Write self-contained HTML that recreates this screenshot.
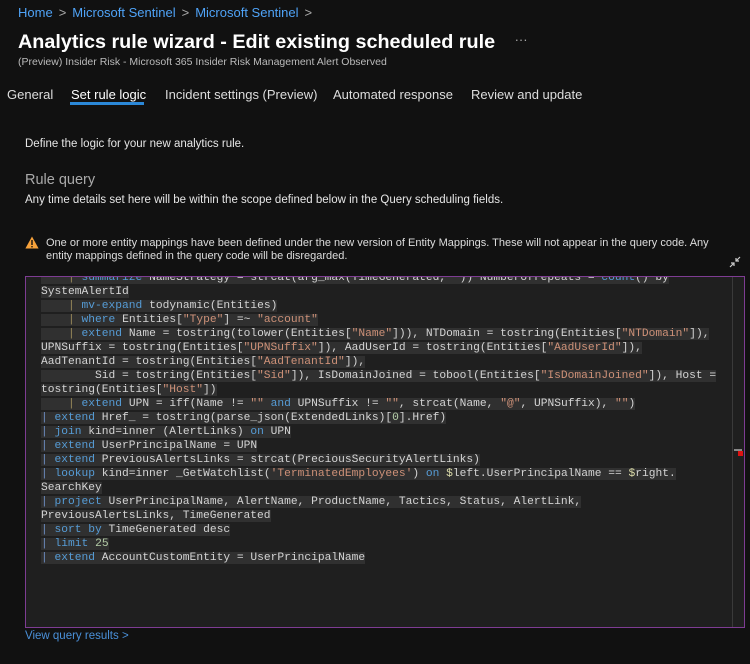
<!DOCTYPE html>
<html><head><meta charset="utf-8"><style>
body{margin:0;width:750px;height:664px;background:#111;color:#fff;font-family:"Liberation Sans",sans-serif;position:relative;overflow:hidden}
.a{position:absolute;white-space:nowrap}
.bc{top:5px;left:18px;font-size:13px;color:#4fa3f7}
.bc i{color:#aaa;font-style:normal;margin:0 6px}
.t{top:31px;left:18px;font-size:19.8px;font-weight:bold;color:#fff}
.st{top:56px;left:18px;font-size:10.5px;color:#bbb}
.tab{top:87px;font-size:13px;color:#ddd}
.ul{top:102px;left:70px;width:74px;height:3px;background:#2b88d8}
.tx{font-size:11.5px;color:#e6e6e6}
.ed{position:absolute;left:25px;top:276px;width:718px;height:350px;background:#1f1f1f;border:1px solid #7e3c93;overflow:hidden}
.code{position:absolute;left:15px;top:-6px;font-family:"Liberation Mono",monospace;font-size:11.25px;line-height:14px;color:#d4d4d4;white-space:pre}
.code span.l{background:#303030;display:inline}
.k{color:#569cd6}.s{color:#ce9178}.n{color:#b5cea8}.y{color:#dcdcaa}.p{color:#9a8a5a}.q{color:#6c8cc0}
</style></head><body>
<div class="a bc">Home<i>&gt;</i>Microsoft Sentinel<i>&gt;</i>Microsoft Sentinel<i>&gt;</i></div>
<div class="a t">Analytics rule wizard - Edit existing scheduled rule <span style="font-weight:normal;font-size:13px;color:#aaa;margin-left:14px;vertical-align:4px">···</span></div>
<div class="a st">(Preview) Insider Risk - Microsoft 365 Insider Risk Management Alert Observed</div>
<div class="a tab" style="left:7px">General</div>
<div class="a tab" style="left:71px;color:#fff">Set rule logic</div>
<div class="a tab" style="left:165px">Incident settings (Preview)</div>
<div class="a tab" style="left:333px">Automated response</div>
<div class="a tab" style="left:471px">Review and update</div>
<div class="a ul"></div>
<div class="a tx" style="top:138px;left:25px">Define the logic for your new analytics rule.</div>
<div class="a" style="top:172px;left:25px;font-size:14.5px;color:#aaa">Rule query</div>
<div class="a tx" style="top:194px;left:25px">Any time details set here will be within the scope defined below in the Query scheduling fields.</div>
<svg class="a" style="top:236px;left:25px" width="14" height="13" viewBox="0 0 14 13"><path d="M7 0.5L13.6 12.5H0.4Z" fill="#f7a23b"/><rect x="6.3" y="4" width="1.4" height="5" fill="#111"/><rect x="6.3" y="10" width="1.4" height="1.4" fill="#111"/></svg>
<div class="a tx" style="top:237px;left:46px;font-size:11px;line-height:13px;color:#ddd;white-space:normal;width:680px">One or more entity mappings have been defined under the new version of Entity Mappings. These will not appear in the query code. Any entity mappings defined in the query code will be disregarded.</div>
<svg class="a" style="top:256px;left:729px" width="12" height="12" viewBox="0 0 12 12" stroke="#ccc" fill="none" stroke-width="1.2"><path d="M11 1L7 5M7 2V5H10M1 11L5 7M2 7H5V10"/></svg>
<div class="ed">
<div style="position:absolute;left:706px;top:0;width:1px;height:350px;background:#3a3a3a"></div>
<div style="position:absolute;left:708px;top:172px;width:8px;height:2px;background:#888"></div>
<div style="position:absolute;left:712px;top:174px;width:5px;height:5px;background:#d11"></div>
<div class="code"><span class="l">    <span class="p">|</span> <span class="k">summarize</span> NameStrategy = strcat(arg_max(TimeGenerated, *)) Numberofrepeats = <span class="k">count</span>() by</span>
<span class="l">SystemAlertId</span>
<span class="l">    <span class="p">|</span> <span class="k">mv-expand</span> todynamic(Entities)</span>
<span class="l">    <span class="p">|</span> <span class="k">where</span> Entities[<span class="s">"Type"</span>] =~ <span class="s">"account"</span></span>
<span class="l">    <span class="p">|</span> <span class="k">extend</span> Name = tostring(tolower(Entities[<span class="s">"Name"</span>])), NTDomain = tostring(Entities[<span class="s">"NTDomain"</span>]),</span>
<span class="l">UPNSuffix = tostring(Entities[<span class="s">"UPNSuffix"</span>]), AadUserId = tostring(Entities[<span class="s">"AadUserId"</span>]),</span>
<span class="l">AadTenantId = tostring(Entities[<span class="s">"AadTenantId"</span>]),</span>
<span class="l">        Sid = tostring(Entities[<span class="s">"Sid"</span>]), IsDomainJoined = tobool(Entities[<span class="s">"IsDomainJoined"</span>]), Host =</span>
<span class="l">tostring(Entities[<span class="s">"Host"</span>])</span>
<span class="l">    <span class="p">|</span> <span class="k">extend</span> UPN = iff(Name != <span class="s">""</span> <span class="k">and</span> UPNSuffix != <span class="s">""</span>, strcat(Name, <span class="s">"@"</span>, UPNSuffix), <span class="s">""</span>)</span>
<span class="l"><span class="q">|</span> <span class="k">extend</span> Href_ = tostring(parse_json(ExtendedLinks)[<span class="n">0</span>].Href)</span>
<span class="l"><span class="q">|</span> <span class="k">join</span> kind=inner (AlertLinks) <span class="k">on</span> UPN</span>
<span class="l"><span class="q">|</span> <span class="k">extend</span> UserPrincipalName = UPN</span>
<span class="l"><span class="q">|</span> <span class="k">extend</span> PreviousAlertsLinks = strcat(PreciousSecurityAlertLinks)</span>
<span class="l"><span class="q">|</span> <span class="k">lookup</span> kind=inner _GetWatchlist(<span class="s">'TerminatedEmployees'</span>) <span class="k">on</span> <span class="y">$</span>left.UserPrincipalName == <span class="y">$</span>right.</span>
<span class="l">SearchKey</span>
<span class="l"><span class="q">|</span> <span class="k">project</span> UserPrincipalName, AlertName, ProductName, Tactics, Status, AlertLink,</span>
<span class="l">PreviousAlertsLinks, TimeGenerated</span>
<span class="l"><span class="q">|</span> <span class="k">sort by</span> TimeGenerated desc</span>
<span class="l"><span class="q">|</span> <span class="k">limit</span> <span class="n">25</span></span>
<span class="l"><span class="q">|</span> <span class="k">extend</span> AccountCustomEntity = UserPrincipalName</span></div>
</div>
<div class="a" style="top:630px;left:25px;font-size:11.5px;color:#4a90d9">View query results &gt;</div>
</body></html>
